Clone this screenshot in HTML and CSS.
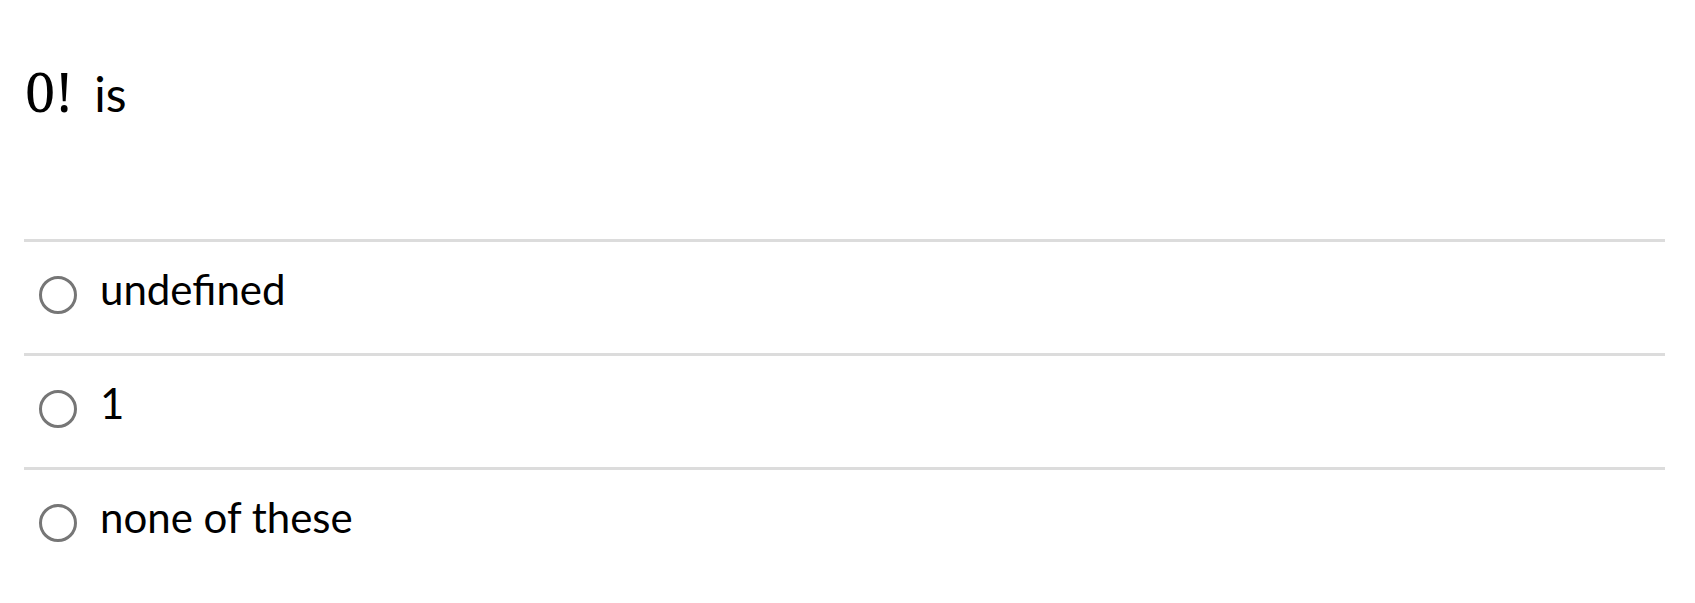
FILE: index.html
```html
<!DOCTYPE html>
<html>
<head>
<meta charset="utf-8">
<link rel="stylesheet" href="styles.css">
</head>
<body>
<div class="quiz">
  <div class="question">
    <span class="math">0!</span><span class="word">is</span>
  </div>
  <div class="answers">
    <label class="answer"><span class="radio"></span><span class="label">undefined</span></label>
    <label class="answer"><span class="radio"></span><span class="label">1</span></label>
    <label class="answer"><span class="radio"></span><span class="label">none of these</span></label>
  </div>
</div>
</body>
</html>
```
FILE: styles.css
```css
html, body {
  margin: 0;
  padding: 0;
  background: #ffffff;
}
body {
  font-family: "Lato", "Liberation Sans", sans-serif;
  color: #000000;
}
.quiz {
  margin-left: 24px;
  width: 1641px;
}
.question {
  height: 239px;
  box-sizing: border-box;
  padding-top: 59px;
  line-height: 64px;
  font-size: 48px;
}
.math {
  font-family: "Noto Serif", "DejaVu Serif", serif;
  font-size: 54px;
  margin-left: 1px;
  margin-right: 21px;
}
.word {
  font-family: "Lato", sans-serif;
}
.answers {
  display: flex;
  flex-direction: column;
}
.answer {
  display: flex;
  align-items: flex-start;
  height: 114px;
  box-sizing: border-box;
  border-top: 3px solid #dcdcdc;
  padding-top: 23px;
}
.radio {
  width: 32px;
  height: 32px;
  border: 3px solid #767676;
  border-radius: 50%;
  margin-top: 11px;
  margin-left: 15px;
  margin-right: 23px;
  flex: none;
}
.label {
  font-size: 42px;
  line-height: 48px;
}
```
